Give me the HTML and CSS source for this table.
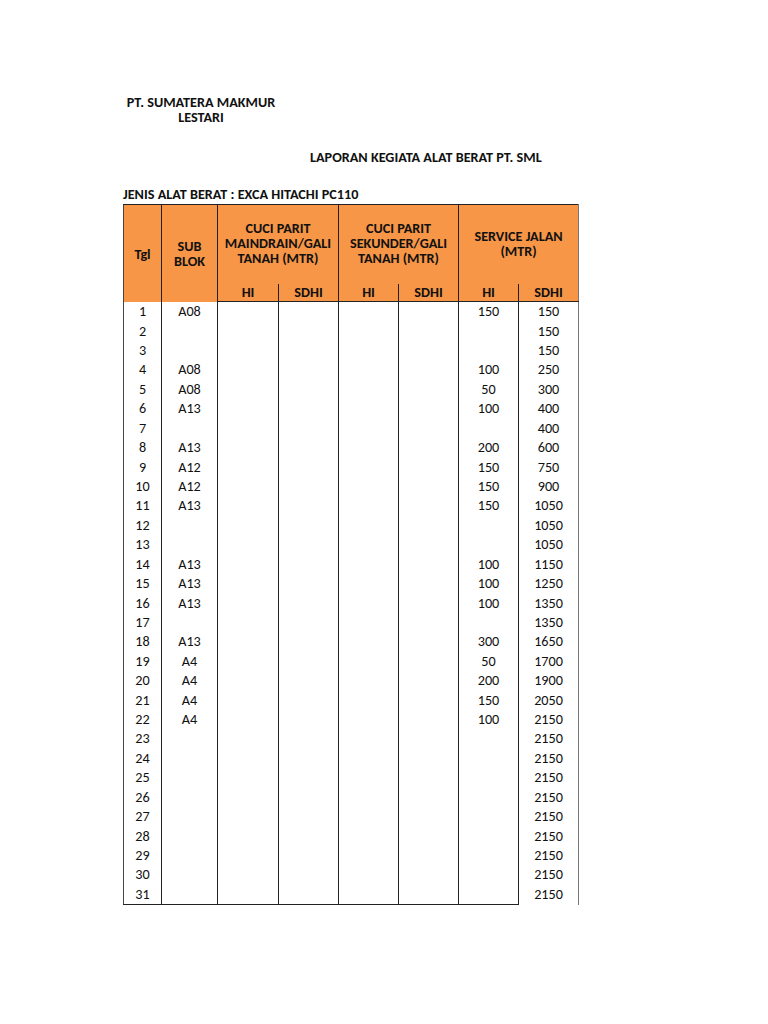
FILE: index.html
```html
<!DOCTYPE html>
<html>
<head>
<meta charset="utf-8">
<link rel="stylesheet" href="styles.css">
</head>
<body>
<div class="page">
  <div class="company">PT. SUMATERA MAKMUR<br>LESTARI</div>
  <div class="report-title">LAPORAN KEGIATA ALAT BERAT PT. SML</div>
  <div class="equipment">JENIS ALAT BERAT : EXCA HITACHI PC110</div>
  <table class="sheet">
    <colgroup>
      <col class="c-tgl"><col class="c-sub"><col class="c-a"><col class="c-b"><col class="c-b"><col class="c-b"><col class="c-b"><col class="c-b">
    </colgroup>
    <thead>
      <tr class="h1">
        <th rowspan="2" class="edge-l">Tgl</th>
        <th rowspan="2">SUB<br>BLOK</th>
        <th colspan="2" class="grp">CUCI PARIT<br>MAINDRAIN/GALI<br>TANAH (MTR)</th>
        <th colspan="2" class="grp">CUCI PARIT<br>SEKUNDER/GALI<br>TANAH (MTR)</th>
        <th colspan="2" class="grp edge-r">SERVICE JALAN<br>(MTR)</th>
      </tr>
      <tr class="h2">
        <th class="sub">HI</th><th class="sub">SDHI</th>
        <th class="sub">HI</th><th class="sub">SDHI</th>
        <th class="sub">HI</th><th class="sub edge-r">SDHI</th>
      </tr>
    </thead>
    <tbody id="rows"></tbody>
  </table>
</div>
<script src="app.js"></script>
</body>
</html>
```

FILE: app.js
```js
var data = [
  [1,"A08","150","150"],[2,"","","150"],[3,"","","150"],[4,"A08","100","250"],
  [5,"A08","50","300"],[6,"A13","100","400"],[7,"","","400"],[8,"A13","200","600"],
  [9,"A12","150","750"],[10,"A12","150","900"],[11,"A13","150","1050"],[12,"","","1050"],
  [13,"","","1050"],[14,"A13","100","1150"],[15,"A13","100","1250"],[16,"A13","100","1350"],
  [17,"","","1350"],[18,"A13","300","1650"],[19,"A4","50","1700"],[20,"A4","200","1900"],
  [21,"A4","150","2050"],[22,"A4","100","2150"],[23,"","","2150"],[24,"","","2150"],
  [25,"","","2150"],[26,"","","2150"],[27,"","","2150"],[28,"","","2150"],
  [29,"","","2150"],[30,"","","2150"],[31,"","","2150"]
];
var tb = document.getElementById("rows");
var html = "";
for (var i = 0; i < data.length; i++) {
  var d = data[i];
  var last = i === data.length - 1 ? " last" : "";
  html += '<tr class="row' + last + '">' +
    '<td class="edge-l">' + d[0] + '</td>' +
    '<td>' + d[1] + '</td>' +
    '<td></td><td></td><td></td><td></td>' +
    '<td>' + d[2] + '</td>' +
    '<td class="edge-r open">' + d[3] + '</td></tr>';
}
tb.innerHTML = html;
```

FILE: styles.css
```css
html, body {
  margin: 0;
  padding: 0;
  background: #ffffff;
}
body {
  font-family: Carlito, Lato, "Liberation Sans", sans-serif;
  font-size: 14.2px;
  color: #111111;
}
.page {
  padding: 95px 0 0 123px;
}
.company {
  width: 156px;
  text-align: center;
  font-weight: bold;
  line-height: 15px;
}
.report-title {
  margin-top: 23px;
  padding-left: 187px;
  font-weight: bold;
  line-height: 19px;
}
.equipment {
  margin-top: 18px;
  font-weight: bold;
  line-height: 19px;
}
.sheet {
  border-collapse: collapse;
  table-layout: fixed;
  width: 455px;
}
.c-tgl { width: 38px; }
.c-sub { width: 56px; }
.c-a { width: 61px; }
.c-b { width: 60px; }
.sheet th {
  background: #f79646;
  font-weight: bold;
  line-height: 15px;
  text-align: center;
  padding: 0;
  border-left: 1px solid #222222;
  border-right: 1px solid #222222;
}
.sheet .h1 th {
  border-top: 1px solid #222222;
  height: 77px;
  vertical-align: middle;
}
.sheet .h1 th[rowspan] {
  padding-top: 2px;
}
.sheet .h1 th.grp {
  padding-bottom: 2px;
}
.sheet .h2 th {
  height: 17px;
  line-height: 17px;
  border-bottom: 1px solid #222222;
}
.sheet td {
  height: 19.43px;
  line-height: 19px;
  padding: 0;
  text-align: center;
  border-left: 1px solid #222222;
  border-right: 1px solid #222222;
}
.sheet .edge-l {
  border-left: 1px solid #444444;
}
.sheet .edge-r {
  border-right: 1px solid #777777;
}
.sheet .last td {
  border-bottom: 1px solid #222222;
}
.sheet .last td.open {
  border-bottom: none;
}
```
